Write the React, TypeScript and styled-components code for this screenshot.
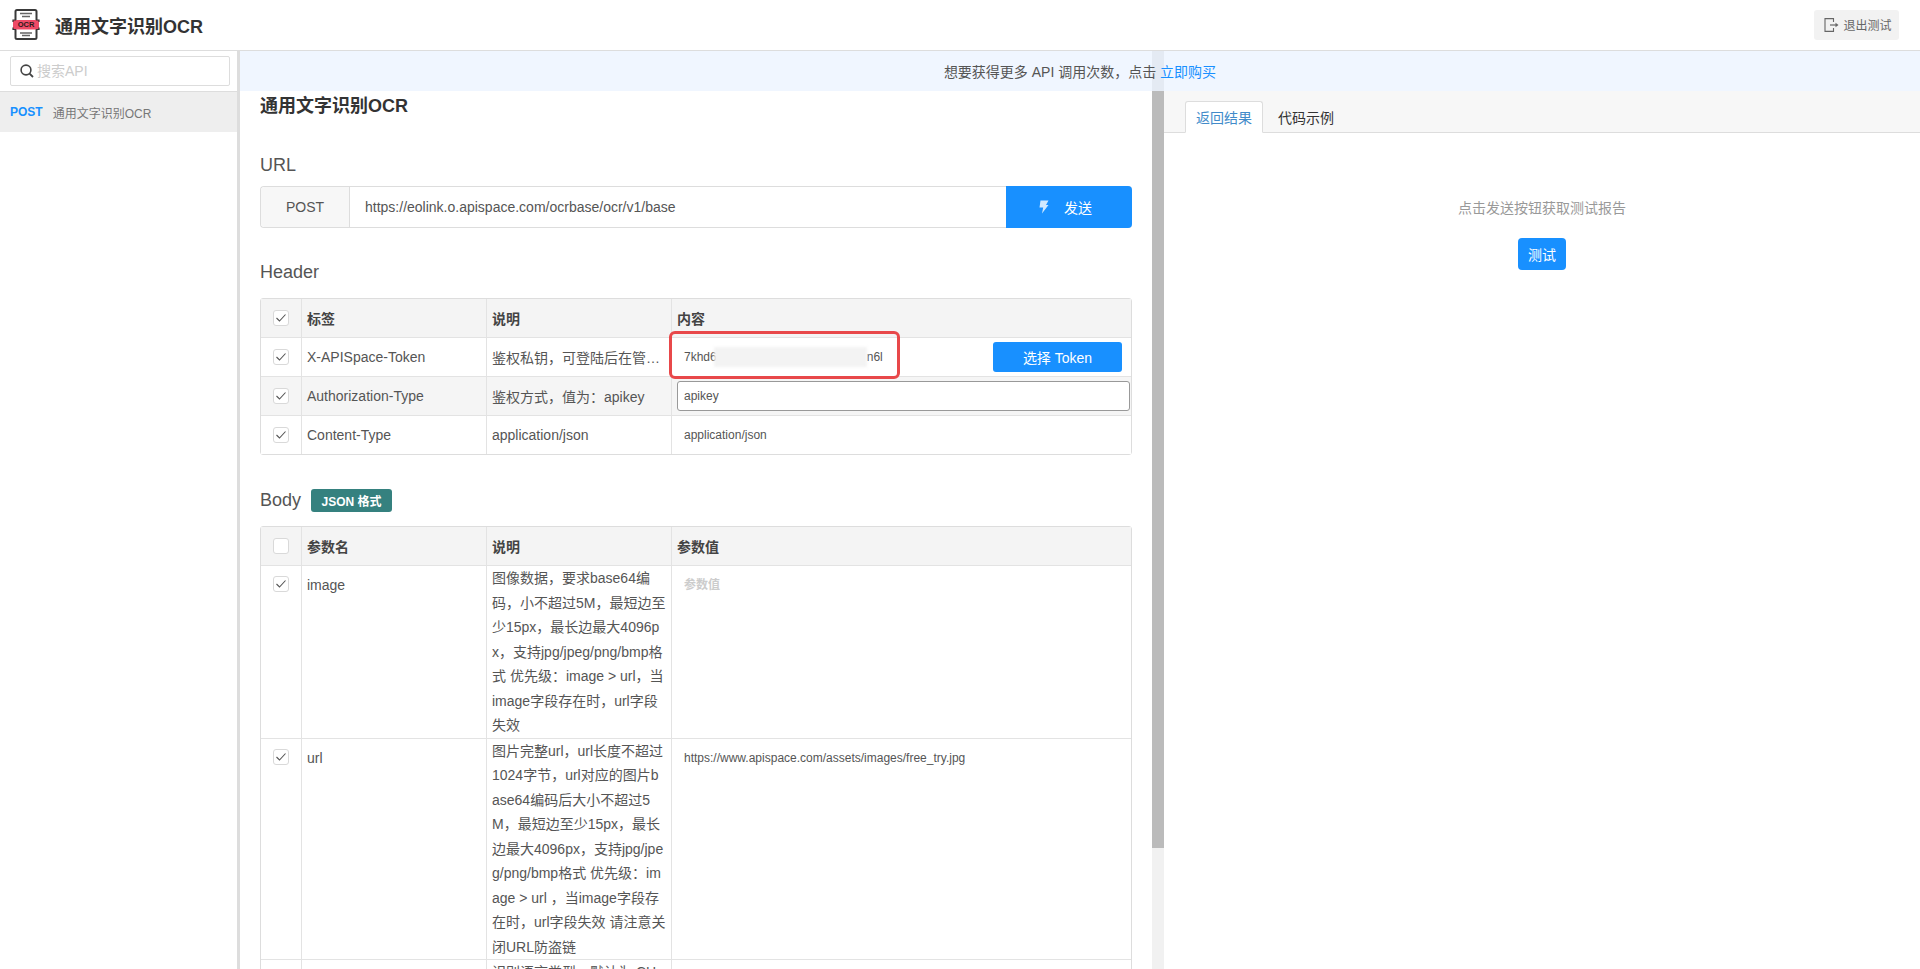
import React from "react";
import styled, { createGlobalStyle } from "styled-components";

const Global = createGlobalStyle`
  html, body { margin: 0; height: 100%; overflow: hidden; background: #fff; }
  body { font-family: "Liberation Sans", "Noto Sans CJK SC", sans-serif; font-size: 14px; color: #555; }
  * { box-sizing: border-box; }
  input { font-family: inherit; }
`;

const Page = styled.div`
  display: flex;
  flex-direction: column;
  height: 100vh;
`;

const TopBar = styled.header`
  flex: 0 0 51px;
  display: flex;
  align-items: center;
  padding: 0 21px 1px 12px;
  border-bottom: 1px solid #ddd;
`;

const AppTitle = styled.h1`
  margin: 0 0 0 15px;
  font-size: 18px;
  font-weight: 700;
  color: #333;
`;

const ExitButton = styled.button`
  margin-left: auto;
  width: 85px;
  height: 30px;
  display: flex;
  align-items: center;
  justify-content: center;
  gap: 3px;
  padding: 0 0 0 3px;
  border: 0;
  border-radius: 3px;
  background: #f2f2f2;
  color: #666;
  font: 12px "Liberation Sans", "Noto Sans CJK SC", sans-serif;
`;

const Workspace = styled.div`
  position: relative;
  flex: 1;
  min-height: 0;
  display: flex;
`;

const Sidebar = styled.aside`
  flex: 0 0 240px;
  border-right: 3px solid #ddd;
`;

const SearchArea = styled.div`
  height: 41px;
  padding: 5px 7px 0 10px;
  border-bottom: 1px solid #ddd;
`;

const SearchBox = styled.label`
  display: flex;
  align-items: center;
  gap: 3px;
  width: 220px;
  height: 30px;
  padding-left: 9px;
  border: 1px solid #ddd;
  border-radius: 2px;
`;

const SearchInput = styled.input`
  flex: 1;
  min-width: 0;
  border: 0;
  outline: 0;
  padding: 0;
  font-size: 14px;
  &::placeholder { color: #ccc; opacity: 1; }
`;

const ApiItem = styled.div`
  height: 40px;
  display: flex;
  align-items: center;
  gap: 10px;
  padding-left: 10px;
  background: #eee;
  font-size: 12px;
  color: #777;
`;

const Method = styled.span`
  font-weight: 700;
  color: #1890ff;
`;

const Banner = styled.div`
  position: absolute;
  z-index: 3;
  top: 0;
  left: 240px;
  right: 0;
  height: 40px;
  display: flex;
  align-items: center;
  justify-content: center;
  white-space: pre;
  background: rgba(237, 244, 255, 0.82);
  color: #555;
`;

const BannerLink = styled.a`
  color: #1890ff;
`;

const Main = styled.main`
  flex: 0 0 912px;
  overflow: hidden;
  padding: 40px 20px 0;
`;

const ScrollRail = styled.div`
  flex: 0 0 12px;
  background: #f1f1f1;
`;

const ScrollThumb = styled.div`
  height: 797px;
  background: #bbb;
`;

const DocTitle = styled.h2`
  margin: 0;
  height: 30px;
  line-height: 30px;
  font-size: 18px;
  font-weight: 700;
  color: #333;
`;

const Heading = styled.div<{ $top: number; $bottom: number }>`
  display: flex;
  align-items: center;
  gap: 10px;
  height: 25px;
  margin: ${(p) => p.$top}px 0 ${(p) => p.$bottom}px;
  font-size: 18px;
  color: #555;
`;

const FormatTag = styled.span`
  display: inline-flex;
  align-items: center;
  justify-content: center;
  width: 81px;
  height: 23px;
  border-radius: 3px;
  background: #35817f;
  color: #fff;
  font-size: 12px;
  font-weight: 700;
`;

const UrlRow = styled.div`
  display: flex;
  height: 42px;
  border: 1px solid #ddd;
  border-right: 0;
  border-radius: 4px;
`;

const MethodBox = styled.div`
  flex: 0 0 89px;
  display: flex;
  align-items: center;
  justify-content: center;
  background: #f7f7f7;
  border-right: 1px solid #ddd;
  border-radius: 4px 0 0 4px;
  color: #555;
`;

const UrlInput = styled.input`
  flex: 1;
  min-width: 0;
  border: 0;
  outline: 0;
  padding: 0 15px;
  font-size: 14px;
  color: #555;
`;

const SendButton = styled.button`
  flex: 0 0 126px;
  margin: -1px 0;
  display: flex;
  align-items: center;
  justify-content: center;
  gap: 15px;
  padding: 0 7px 0 0;
  border: 0;
  border-radius: 0 4px 4px 0;
  background: #1890ff;
  color: #fff;
  font: 14px "Liberation Sans", "Noto Sans CJK SC", sans-serif;
`;

const Table = styled.div`
  width: 872px;
  border: 1px solid #ddd;
  border-radius: 3px;
`;

const Row = styled.div<{ $head?: boolean; $hover?: boolean }>`
  display: grid;
  grid-template-columns: 41px 185px 185px 1fr;
  align-items: stretch;
  min-height: 39px;
  border-bottom: 1px solid #e3e3e3;
  background: ${(p) => (p.$head ? "#f4f4f4" : p.$hover ? "#f5f5f5" : "#fff")};
  font-weight: ${(p) => (p.$head ? 700 : 400)};
  color: ${(p) => (p.$head ? "#444" : "#555")};
  &:last-child { border-bottom: 0; min-height: 38px; }
`;

const Cell = styled.div<{ $top?: boolean }>`
  position: relative;
  display: flex;
  align-items: ${(p) => (p.$top ? "flex-start" : "center")};
  min-width: 0;
  padding: ${(p) => (p.$top ? "11px 5px 0" : "0 5px")};
  border-right: 1px solid #e3e3e3;
  &:last-child { border-right: 0; }
`;

const CheckCell = styled(Cell)`
  justify-content: center;
  padding: ${(p) => (p.$top ? "10px 0 0" : "0")};
`;

const Check = styled.span`
  flex: 0 0 16px;
  width: 16px;
  height: 16px;
  display: flex;
  align-items: center;
  justify-content: center;
  border: 1px solid #d9d9d9;
  border-radius: 3px;
  background: #fff;
`;

const Ellipsis = styled.span`
  overflow: hidden;
  white-space: nowrap;
  text-overflow: ellipsis;
`;

const DescCell = styled(Cell)`
  display: block;
  padding: 0 5px;
  line-height: 24.5px;
  word-break: break-all;
`;

const ValueCell = styled(Cell)`
  padding: ${(p) => (p.$top ? "4px 1px 0 5px" : "0 1px 0 5px")};
`;

const ValueInput = styled.input<{ $focus?: boolean }>`
  width: 100%;
  height: 30px;
  padding: 0 6px;
  border: 1px solid ${(p) => (p.$focus ? "#999" : "transparent")};
  border-radius: 3px;
  outline: 0;
  background: ${(p) => (p.$focus ? "#fff" : "transparent")};
  font-size: 12px;
  color: #555;
  &::placeholder { color: #ccc; font-weight: 700; opacity: 1; }
`;

const TokenValue = styled.div`
  display: flex;
  align-items: center;
  padding-left: 7px;
  font-size: 12px;
  color: #555;
`;

const Redaction = styled.span`
  width: 153px;
  height: 20px;
  margin-left: -3px;
  background: #f3f3f3;
  filter: blur(1.5px);
`;

const TokenButton = styled.button`
  margin: 0 8px 0 auto;
  width: 129px;
  height: 30px;
  padding: 0;
  border: 0;
  border-radius: 3px;
  background: #1890ff;
  color: #fff;
  font: 14px "Liberation Sans", "Noto Sans CJK SC", sans-serif;
`;

const Callout = styled.div`
  position: absolute;
  z-index: 2;
  left: -3px;
  top: -7px;
  width: 231px;
  height: 48px;
  border: 3px solid #e8484a;
  border-radius: 6px;
  pointer-events: none;
`;

const Result = styled.section`
  flex: 1;
  min-width: 0;
  padding-top: 40px;
  display: flex;
  flex-direction: column;
  align-items: center;
`;

const TabBar = styled.div`
  align-self: stretch;
  height: 42px;
  display: flex;
  align-items: flex-end;
  padding-left: 21px;
  background: #f7f7f7;
  border-bottom: 1px solid #ddd;
`;

const Tab = styled.div<{ $active?: boolean }>`
  height: 32px;
  margin-bottom: -1px;
  margin-right: 4px;
  padding: 0 10px;
  display: flex;
  align-items: center;
  border: 1px solid ${(p) => (p.$active ? "#ddd" : "transparent")};
  border-bottom-color: ${(p) => (p.$active ? "#fff" : "transparent")};
  border-radius: 3px 3px 0 0;
  background: ${(p) => (p.$active ? "#fff" : "transparent")};
  color: ${(p) => (p.$active ? "#428bca" : "#333")};
`;

const Hint = styled.p`
  margin: 65px 0 20px;
  line-height: 20px;
  color: #999;
`;

const TestButton = styled.button`
  width: 48px;
  height: 32px;
  padding: 0;
  border: 0;
  border-radius: 4px;
  background: #1890ff;
  color: #fff;
  font: 14px "Liberation Sans", "Noto Sans CJK SC", sans-serif;
`;

const Logo = () => (
  <svg width="28" height="31" viewBox="0 0 28 31" aria-hidden="true">
    <rect x="3.5" y="1" width="21" height="29" rx="1.5" fill="#fff" stroke="#3a3a3a" strokeWidth="2" />
    <path d="M8 4.5h12M10 7.5h8M8 24h12M10 26.5h8" stroke="#666" strokeWidth="1.3" />
    <rect x="1" y="11" width="26" height="9.5" fill="#ee4a66" />
    <path d="M1 13v-2h3M24 11h3v2M1 18.5v2h3M24 20.5h3v-2" stroke="#333" strokeWidth="1.2" fill="none" />
    <text x="14" y="18.4" textAnchor="middle" fontSize="7.5" fontWeight="700" fontFamily="Liberation Sans" fill="#2a1a1a">OCR</text>
  </svg>
);

const SearchIcon = () => (
  <svg width="14" height="14" viewBox="0 0 14 14" aria-hidden="true">
    <circle cx="6" cy="6" r="4.9" fill="none" stroke="#444" strokeWidth="1.6" />
    <path d="M9.6 9.6L13 13" stroke="#444" strokeWidth="1.8" />
  </svg>
);

const ExitIcon = () => (
  <svg width="16" height="14" viewBox="0 0 16 14" aria-hidden="true">
    <path d="M9.5 4V.6H1v12.8h8.5V10" fill="none" stroke="#666" strokeWidth="1.1" />
    <path d="M6 7h6.5" stroke="#666" strokeWidth="1.2" />
    <path d="M11.5 4.8L14.5 7l-3 2.2z" fill="#666" />
  </svg>
);

const BoltIcon = () => (
  <svg width="10" height="14" viewBox="0 0 10 14" aria-hidden="true">
    <path d="M1.5 0.5H9.5L7 5H9.5L3 13.5L4.2 7.5H0.5z" fill="#fff" fillOpacity="0.8" />
  </svg>
);

const Tick = () => (
  <svg width="12" height="10" viewBox="0 0 12 10" aria-hidden="true">
    <path d="M1.5 5l3 3L10.5 1.5" fill="none" stroke="#555" strokeWidth="1.1" />
  </svg>
);

const CheckMark = ({ on = true }: { on?: boolean }) => <Check>{on && <Tick />}</Check>;

const bodyRows = [
  {
    name: "image",
    desc: "图像数据，要求base64编码，小不超过5M，最短边至少15px，最长边最大4096px，支持jpg/jpeg/png/bmp格式 优先级：image > url，当image字段存在时，url字段失效",
    value: "",
  },
  {
    name: "url",
    desc: "图片完整url，url长度不超过1024字节，url对应的图片base64编码后大小不超过5M，最短边至少15px，最长边最大4096px，支持jpg/jpeg/png/bmp格式 优先级：image > url ，当image字段存在时，url字段失效 请注意关闭URL防盗链",
    value: "https://www.apispace.com/assets/images/free_try.jpg",
  },
  { name: "language_type", desc: "识别语言类型，默认为 CHN_ENG", value: "" },
];

export default function App() {
  return (
    <Page>
      <Global />
      <TopBar>
        <Logo />
        <AppTitle>通用文字识别OCR</AppTitle>
        <ExitButton>
          <ExitIcon />
          退出测试
        </ExitButton>
      </TopBar>
      <Workspace>
        <Banner>
          想要获得更多 API 调用次数，点击 <BannerLink>立即购买</BannerLink>
        </Banner>
        <Sidebar>
          <SearchArea>
            <SearchBox>
              <SearchIcon />
              <SearchInput placeholder="搜索API" readOnly />
            </SearchBox>
          </SearchArea>
          <ApiItem>
            <Method>POST</Method>
            通用文字识别OCR
          </ApiItem>
        </Sidebar>
        <Main>
          <DocTitle>通用文字识别OCR</DocTitle>
          <Heading $top={32} $bottom={8}>URL</Heading>
          <UrlRow>
            <MethodBox>POST</MethodBox>
            <UrlInput readOnly value="https://eolink.o.apispace.com/ocrbase/ocr/v1/base" />
            <SendButton>
              <BoltIcon />
              发送
            </SendButton>
          </UrlRow>
          <Heading $top={32} $bottom={13}>Header</Heading>
          <Table>
            <Row $head>
              <CheckCell><CheckMark /></CheckCell>
              <Cell>标签</Cell>
              <Cell>说明</Cell>
              <Cell>内容</Cell>
            </Row>
            <Row>
              <CheckCell><CheckMark /></CheckCell>
              <Cell>X-APISpace-Token</Cell>
              <Cell><Ellipsis>鉴权私钥，可登陆后在管理中心查看</Ellipsis></Cell>
              <ValueCell>
                <Callout />
                <TokenValue>
                  7khd6
                  <Redaction />
                  n6l
                </TokenValue>
                <TokenButton>选择 Token</TokenButton>
              </ValueCell>
            </Row>
            <Row $hover>
              <CheckCell><CheckMark /></CheckCell>
              <Cell>Authorization-Type</Cell>
              <Cell>鉴权方式，值为：apikey</Cell>
              <ValueCell><ValueInput $focus readOnly value="apikey" /></ValueCell>
            </Row>
            <Row>
              <CheckCell><CheckMark /></CheckCell>
              <Cell>Content-Type</Cell>
              <Cell>application/json</Cell>
              <ValueCell><ValueInput readOnly value="application/json" /></ValueCell>
            </Row>
          </Table>
          <Heading $top={33} $bottom={13}>
            Body
            <FormatTag>JSON 格式</FormatTag>
          </Heading>
          <Table>
            <Row $head>
              <CheckCell><CheckMark on={false} /></CheckCell>
              <Cell>参数名</Cell>
              <Cell>说明</Cell>
              <Cell>参数值</Cell>
            </Row>
            {bodyRows.map((r) => (
              <Row key={r.name}>
                <CheckCell $top><CheckMark /></CheckCell>
                <Cell $top>{r.name}</Cell>
                <DescCell>{r.desc}</DescCell>
                <ValueCell $top><ValueInput readOnly placeholder="参数值" value={r.value} /></ValueCell>
              </Row>
            ))}
          </Table>
        </Main>
        <ScrollRail>
          <ScrollThumb />
        </ScrollRail>
        <Result>
          <TabBar>
            <Tab $active>返回结果</Tab>
            <Tab>代码示例</Tab>
          </TabBar>
          <Hint>点击发送按钮获取测试报告</Hint>
          <TestButton>测试</TestButton>
        </Result>
      </Workspace>
    </Page>
  );
}
